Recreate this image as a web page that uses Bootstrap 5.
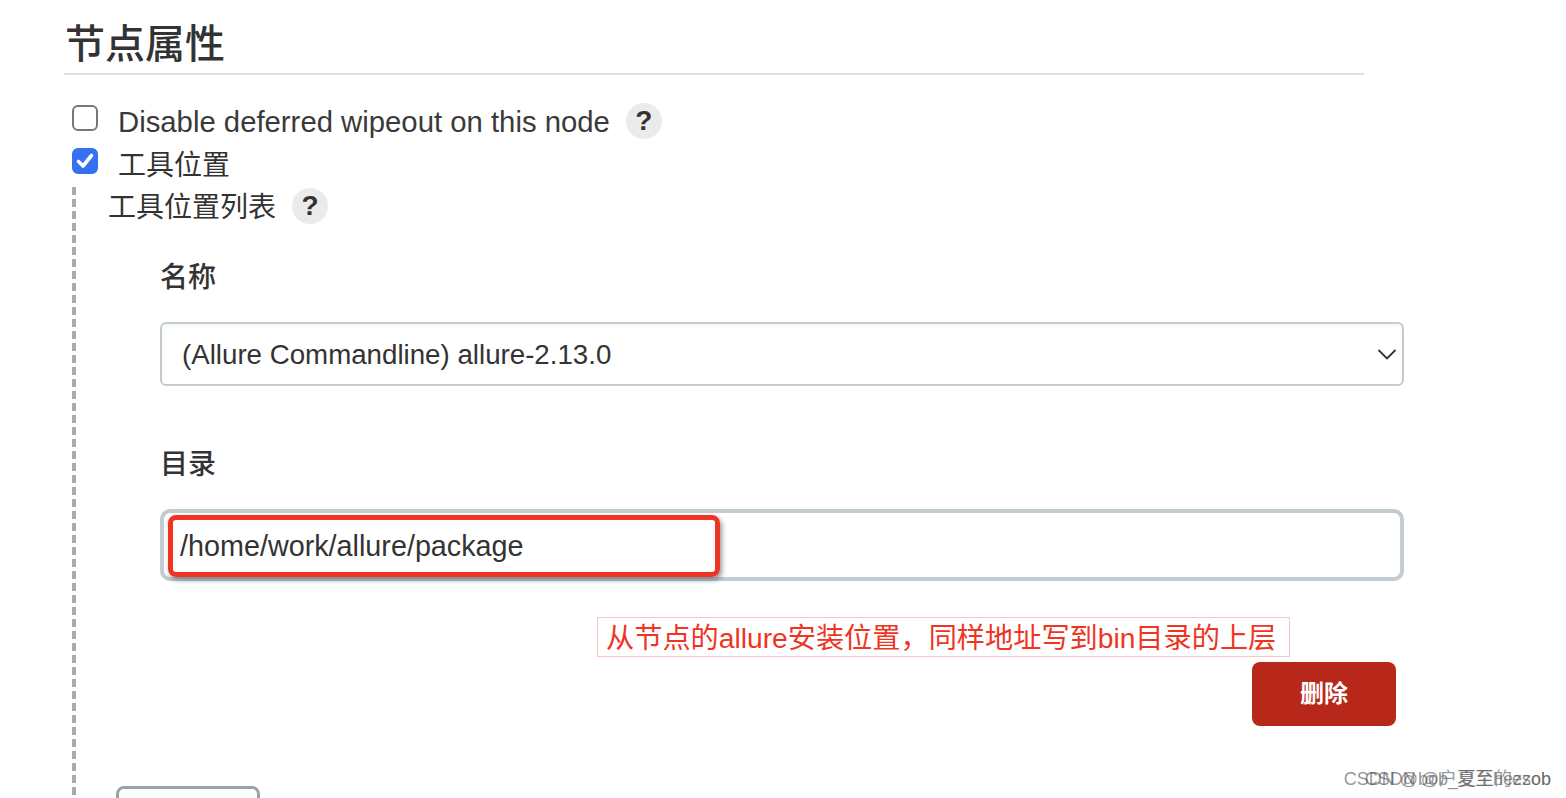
<!DOCTYPE html>
<html lang="zh">
<head>
<meta charset="utf-8">
<title>节点属性</title>
<link href="https://cdn.jsdelivr.net/npm/bootstrap@5.3.0/dist/css/bootstrap.min.css" rel="stylesheet">
<script src="https://cdn.jsdelivr.net/npm/bootstrap@5.3.0/dist/js/bootstrap.bundle.min.js"></script>
<style>
html,body{height:798px;overflow:hidden;background:#fff}
body{position:relative;font-family:"Liberation Sans","Noto Sans CJK SC",sans-serif;color:#333;font-size:28px;line-height:1.2}
.page-wrap{padding:0 0 0 64px;height:798px;overflow:hidden}
.sec-title{width:1300px;height:75px;margin:0;padding:20px 0 0 1px;font-size:40px;line-height:48px;font-weight:500;color:#333;border-bottom:2px solid #e0e0e0}
.opt-row{height:43px;padding-left:8px;gap:20px}
.first-opt{margin-top:30px}
.opt-row .form-check-input{width:26px;height:26px;margin:0;flex:none;border:2px solid #777;border-radius:6px;align-self:flex-start;box-shadow:none}
.opt-row .form-check-input:checked{background-color:#3371f2;border-color:#3371f2;background-size:24px 24px;background-image:url("data:image/svg+xml,%3csvg xmlns='http://www.w3.org/2000/svg' viewBox='0 0 24 24'%3e%3cpath fill='none' stroke='%23fff' stroke-width='3.6' stroke-linecap='round' stroke-linejoin='round' d='M5.5 12.5l4.5 4.500 8.500-10.500'/%3e%3c/svg%3e")}
.opt-row label{line-height:34px;margin-top:-8px}
.opt-row .latin-label{font-size:29.3px;color:#3a3a3a;margin-top:-10px}
.help-dot{width:36px;height:36px;border-radius:50%;background:#ebebeb;color:#333;font-weight:700;font-size:28px;line-height:36px;text-align:center;flex:none}
.first-opt .help-dot{margin-left:-4px;margin-top:-11px}
.tool-block{margin-left:8px;padding-left:36px;height:640px;background:repeating-linear-gradient(to bottom,#aaa 0 8px,transparent 8px 12px) left top/4px 100% no-repeat}
.list-head{height:38px;gap:16px;margin-top:-4px;padding-top:3px}
.list-head .help-dot{margin-top:-4px}
.fld{padding-left:52px;width:1296px}
.fld-label{font-size:28px;line-height:34px;font-weight:500;margin:0;color:#333}
.name-label{margin-top:36px}
.fld-select.form-select{height:64px;margin-top:27px;border:2px solid #c3ccd1;border-radius:6px;font-size:27.7px;color:#333;padding:2px 40px 0 20px;background-size:24px 24px;background-position:right 3px center;font-family:inherit;box-shadow:inset 0 2px 3px rgba(0,0,0,.04);background-image:url("data:image/svg+xml,%3csvg xmlns='http://www.w3.org/2000/svg' viewBox='0 0 24 24'%3e%3cpath fill='none' stroke='%23333' stroke-width='1.8' d='M3.5 8l8.500 8.500L20.500 8'/%3e%3c/svg%3e")}
.dir-label{margin-top:62px}
.fld-input.form-control{height:72px;margin-top:27px;border:4px solid #c3ccd1;border-radius:10px;font-size:28.75px;color:#333;padding:2px 15px 0 16px;font-family:inherit;box-shadow:none}
.del-row{margin-top:81px;padding-right:8px}
.del-btn.btn{width:144px;height:64px;background:#b8281a;border:0;border-radius:8px;color:#fff;font-size:24px;font-weight:700;padding:0}
.add-btn.btn{display:block;width:144px;height:64px;margin:60px 0 0 8px;background:#fff;border:3px solid #9aa5ab;border-radius:8px}
.red-mark{position:absolute;left:168px;top:515px;width:552px;height:62px;border:5px solid #ee3524;border-radius:8px;box-shadow:2px 3px 5px rgba(60,70,80,.55)}
.red-note{position:absolute;left:597px;top:617px;width:693px;height:40px;border:1px solid #fbc5c0;color:#ee3524;font-size:28.2px;line-height:41px;padding-left:8px;white-space:nowrap}
.wm{position:absolute;top:767px;right:15px;font-size:18px;line-height:24px;color:rgba(80,80,80,.6);white-space:nowrap}
</style>
</head>
<body>
<main class="page-wrap">
  <h2 class="sec-title">节点属性</h2>
  <div class="d-flex align-items-center opt-row first-opt">
    <input class="form-check-input" type="checkbox" id="c1" aria-label="Disable deferred wipeout on this node">
    <label for="c1" class="latin-label">Disable deferred wipeout on this node</label>
    <span class="help-dot">?</span>
  </div>
  <div class="d-flex align-items-center opt-row">
    <input class="form-check-input" type="checkbox" id="c2" checked aria-label="工具位置">
    <label for="c2">工具位置</label>
  </div>
  <div class="tool-block">
    <div class="d-flex align-items-center list-head"><span>工具位置列表</span><span class="help-dot">?</span></div>
    <div class="fld">
      <div class="fld-label name-label">名称</div>
      <select class="form-select fld-select" aria-label="名称"><option>(Allure Commandline) allure-2.13.0</option></select>
      <div class="fld-label dir-label">目录</div>
      <input class="form-control fld-input" type="text" value="/home/work/allure/package" aria-label="目录">
      <div class="d-flex justify-content-end del-row"><button class="btn del-btn" type="button">删除</button></div>
    </div>
    <button class="btn add-btn" type="button" aria-label="新增"></button>
  </div>
</main>
<div class="red-mark"></div>
<div class="red-note">从节点的allure安装位置，同样地址写到bin目录的上层</div>
<div class="wm">CSDN @bob_夏至的esob</div>
<div class="wm">CSDN @户夏至hezzob</div>
</body>
</html>
